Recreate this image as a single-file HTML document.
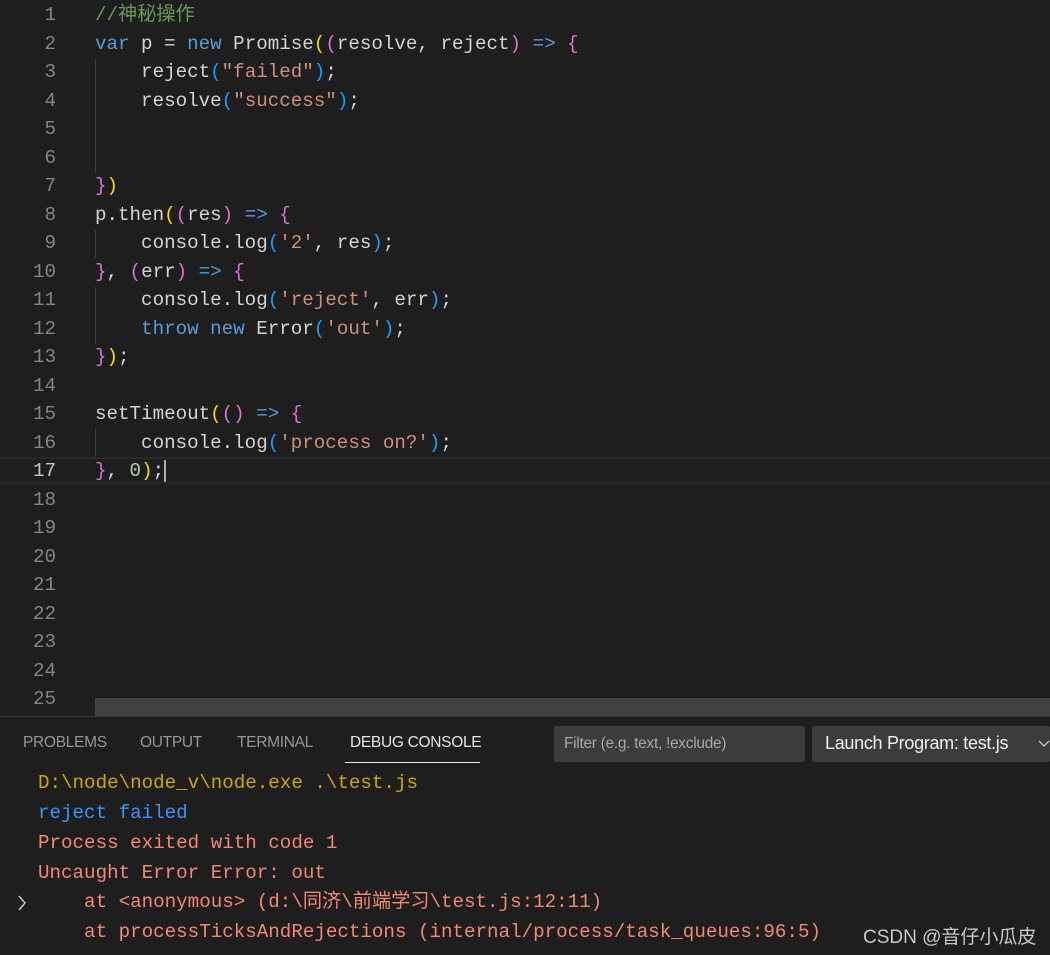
<!DOCTYPE html>
<html><head><meta charset="utf-8"><style>
body{margin:0;width:1050px;height:955px;background:#1e1e1e;overflow:hidden;position:relative;font-family:"Liberation Mono","Noto Sans CJK SC",monospace;}
.l{position:absolute;left:0;height:28.5px;line-height:28.5px;font-size:19.2px;white-space:pre;color:#d4d4d4;width:1050px}
.n{position:absolute;left:0;width:56px;text-align:right;color:#858585}
.c{position:absolute;left:95px}
.k{color:#569cd6}.s{color:#ce9178}.m{color:#6a9955}.g{color:#ffd700}.p{color:#da70d6}.b{color:#179fff}.num{color:#b5cea8}
.guide{position:absolute;left:95px;width:1px;background:#404040}
.tab{position:absolute;top:734px;font-family:"Liberation Sans",sans-serif;font-size:15.5px;color:#969696;letter-spacing:-0.3px}
.o{position:absolute;left:38px;font-size:19.2px;white-space:pre;height:30px;line-height:30px}
</style></head><body>
<div class="guide" style="top:59px;height:114px"></div>
<div class="guide" style="top:230px;height:28px"></div>
<div class="guide" style="top:287px;height:57px"></div>
<div class="guide" style="top:429px;height:28px"></div>
<div style="position:absolute;left:0;top:457px;width:1050px;height:27px;border-top:2px solid #282828;border-bottom:2px solid #282828;box-sizing:border-box"></div>

<div class="l" style="top:1px"><span class="n">1</span><span class="c m">//神秘操作</span></div>
<div class="l" style="top:30px"><span class="n">2</span><span class="c"><span class="k">var</span> p = <span class="k">new</span> Promise<span class="g">(</span><span class="p">(</span>resolve, reject<span class="p">)</span> <span class="k">=&gt;</span> <span class="p">{</span></span></div>
<div class="l" style="top:58px"><span class="n">3</span><span class="c">    reject<span class="b">(</span><span class="s">"failed"</span><span class="b">)</span>;</span></div>
<div class="l" style="top:87px"><span class="n">4</span><span class="c">    resolve<span class="b">(</span><span class="s">"success"</span><span class="b">)</span>;</span></div>
<div class="l" style="top:115px"><span class="n">5</span></div>
<div class="l" style="top:144px"><span class="n">6</span></div>
<div class="l" style="top:172px"><span class="n">7</span><span class="c"><span class="p">}</span><span class="g">)</span></span></div>
<div class="l" style="top:201px"><span class="n">8</span><span class="c">p.then<span class="g">(</span><span class="p">(</span>res<span class="p">)</span> <span class="k">=&gt;</span> <span class="p">{</span></span></div>
<div class="l" style="top:229px"><span class="n">9</span><span class="c">    console.log<span class="b">(</span><span class="s">'2'</span>, res<span class="b">)</span>;</span></div>
<div class="l" style="top:258px"><span class="n">10</span><span class="c"><span class="p">}</span>, <span class="p">(</span>err<span class="p">)</span> <span class="k">=&gt;</span> <span class="p">{</span></span></div>
<div class="l" style="top:286px"><span class="n">11</span><span class="c">    console.log<span class="b">(</span><span class="s">'reject'</span>, err<span class="b">)</span>;</span></div>
<div class="l" style="top:315px"><span class="n">12</span><span class="c">    <span class="k">throw</span> <span class="k">new</span> Error<span class="b">(</span><span class="s">'out'</span><span class="b">)</span>;</span></div>
<div class="l" style="top:343px"><span class="n">13</span><span class="c"><span class="p">}</span><span class="g">)</span>;</span></div>
<div class="l" style="top:372px"><span class="n">14</span></div>
<div class="l" style="top:400px"><span class="n">15</span><span class="c">setTimeout<span class="g">(</span><span class="p">()</span> <span class="k">=&gt;</span> <span class="p">{</span></span></div>
<div class="l" style="top:429px"><span class="n">16</span><span class="c">    console.log<span class="b">(</span><span class="s">'process on?'</span><span class="b">)</span>;</span></div>
<div class="l" style="top:457px"><span class="n" style="color:#c6c6c6">17</span><span class="c"><span class="p">}</span>, <span class="num">0</span><span class="g">)</span>;<span style="display:inline-block;width:2px;height:22px;background:#aeafad;vertical-align:middle"></span></span></div>
<div class="l" style="top:486px"><span class="n">18</span></div>
<div class="l" style="top:514px"><span class="n">19</span></div>
<div class="l" style="top:543px"><span class="n">20</span></div>
<div class="l" style="top:571px"><span class="n">21</span></div>
<div class="l" style="top:600px"><span class="n">22</span></div>
<div class="l" style="top:628px"><span class="n">23</span></div>
<div class="l" style="top:657px"><span class="n">24</span></div>
<div class="l" style="top:685px"><span class="n">25</span></div>
<div style="position:absolute;left:95px;top:698px;width:955px;height:18px;background:#424242"></div>
<div style="position:absolute;left:0;top:716px;width:1050px;height:1px;background:#333"></div>

<div class="tab" style="left:23px">PROBLEMS</div>
<div class="tab" style="left:140px">OUTPUT</div>
<div class="tab" style="left:237px">TERMINAL</div>
<div class="tab" style="left:350px;color:#e7e7e7">DEBUG CONSOLE</div>
<div style="position:absolute;left:345px;top:762px;width:135px;height:1px;background:#e7e7e7"></div>
<div style="position:absolute;left:554px;top:726px;width:251px;height:36px;background:#3c3c3c;border-radius:2px"></div>
<div class="tab" style="left:564px;top:735px;color:#a6a6a6">Filter (e.g. text, !exclude)</div>
<div style="position:absolute;left:812px;top:726px;width:238px;height:36px;background:#3c3c3c;border-radius:2px"></div>
<div class="tab" style="left:825px;top:733px;color:#f0f0f0;font-size:18px">Launch Program: test.js</div>
<svg style="position:absolute;left:1038px;top:738px" width="12" height="12"><path d="M1 3l5 5 5-5" stroke="#ccc" fill="none" stroke-width="1.3"/></svg>

<div class="o" style="top:768px;color:#cca700">D:\node\node_v\node.exe .\test.js</div>
<div class="o" style="top:798px;color:#3794ff">reject failed</div>
<div class="o" style="top:828px;color:#f48771">Process exited with code 1</div>
<div class="o" style="top:858px;color:#f48771">Uncaught Error Error: out</div>
<div class="o" style="top:887px;color:#f48771">    at &lt;anonymous&gt; (d:\同济\前端学习\test.js:12:11)</div>
<div class="o" style="top:917px;color:#f48771">    at processTicksAndRejections (internal/process/task_queues:96:5)</div>
<svg style="position:absolute;left:16px;top:894px" width="12" height="18"><path d="M3 2l6 7-6 7" stroke="#ccc" fill="none" stroke-width="1.4"/></svg>
<div style="position:absolute;left:863px;top:922px;font-family:'Liberation Sans','Noto Sans CJK SC',sans-serif;font-size:19px;color:#c8c8c8">CSDN @音仔小瓜皮</div>
</body></html>
